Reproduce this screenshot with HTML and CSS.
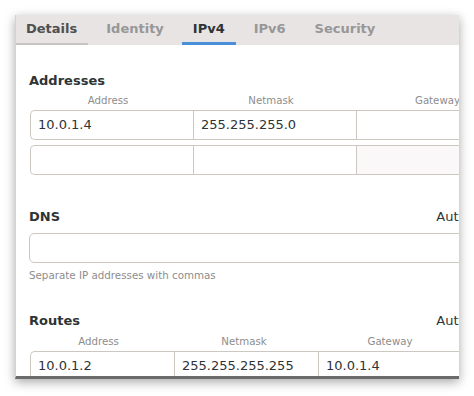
FILE: index.html
```html
<!DOCTYPE html>
<html lang="en">
<head>
  <meta charset="UTF-8">
  <title>IPv4 Settings</title>
  <link rel="stylesheet" href="styles.css">
</head>
<body>
  <div class="window">
    <div class="tabs">
      <div class="tab hover">Details</div>
      <div class="tab">Identity</div>
      <div class="tab active">IPv4</div>
      <div class="tab">IPv6</div>
      <div class="tab">Security</div>
    </div>

    <div class="content">
      <div class="section-title first">
        <span>Addresses</span>
      </div>
      <div class="col-heads addr">
        <span>Address</span>
        <span>Netmask</span>
        <span>Gateway</span>
      </div>
      <div class="linked addr">
        <div class="cell">10.0.1.4</div>
        <div class="cell">255.255.255.0</div>
        <div class="cell"></div>
      </div>
      <div class="linked addr second">
        <div class="cell"></div>
        <div class="cell"></div>
        <div class="cell disabled"></div>
      </div>

      <div class="section-title dns">
        <span>DNS</span>
        <span class="auto">Automatic <span class="switch"></span></span>
      </div>
      <div class="entry"></div>
      <div class="hint">Separate IP addresses with commas</div>

      <div class="section-title routes">
        <span>Routes</span>
        <span class="auto">Automatic <span class="switch"></span></span>
      </div>
      <div class="col-heads route">
        <span>Address</span>
        <span>Netmask</span>
        <span>Gateway</span>
        <span>Metric</span>
      </div>
      <div class="linked route">
        <div class="cell">10.0.1.2</div>
        <div class="cell">255.255.255.255</div>
        <div class="cell">10.0.1.4</div>
        <div class="cell"></div>
      </div>
    </div>
  </div>
</body>
</html>
```

FILE: styles.css
```css
body {
  margin: 0;
  background-color: #ffffff;
  font-family: "DejaVu Sans", sans-serif;
  color: #2e3436;
  width: 474px;
  height: 396px;
  overflow: hidden;
}
.window {
  margin: 15px 0 0 15px;
  width: 443px;
  height: 361px;
  overflow: hidden;
  background-color: #ffffff;
  border-left: 1px solid #d6d2d2;
  border-bottom: 3px solid #6b6b6b;
  box-shadow: 0 3px 10px rgba(0, 0, 0, 0.35);
}
.tabs {
  display: flex;
  gap: 7px;
  height: 30px;
  background-color: #e8e4e4;
  box-sizing: border-box;
}
.tab {
  padding: 0 11px;
  height: 30px;
  line-height: 28px;
  box-sizing: border-box;
  font-size: 13px;
  font-weight: bold;
  color: #979797;
  border-bottom: 3px solid transparent;
}
.tab:first-child {
  padding-left: 10px;
}
.tab.hover {
  color: #4f4f4f;
  border-bottom: 2px solid #c9c4c4;
}
.tab.active {
  color: #2e3436;
  border-bottom-color: #4a90d9;
}
.content {
  width: 536px;
  padding-left: 13px;
}
.section-title {
  display: flex;
  justify-content: space-between;
  align-items: center;
  height: 16px;
  font-size: 13px;
  font-weight: bold;
}
.section-title.first {
  padding-top: 27px;
}
.section-title.dns {
  margin-top: 33px;
}
.section-title.routes {
  margin-top: 30px;
}
.auto {
  display: flex;
  align-items: center;
  gap: 12px;
  font-weight: normal;
}
.switch {
  display: inline-block;
  width: 48px;
  height: 24px;
  border: 1px solid #cdc7c2;
  border-radius: 12px;
  background-color: #e1dedb;
}
.col-heads {
  display: flex;
  height: 14px;
  line-height: 14px;
  margin: 6px 0 2px 1px;
  font-size: 10.2px;
  color: #8d8d8d;
}
.col-heads span {
  flex-shrink: 0;
  text-align: center;
  padding-right: 7px;
  box-sizing: border-box;
}
.col-heads.addr span {
  width: 163px;
}
.col-heads.addr span:nth-child(3) {
  padding-right: 0;
}
.col-heads.route {
  margin-top: 7px;
}
.col-heads.route span {
  width: 144px;
}
.col-heads.route span:nth-child(2) {
  padding-right: 4px;
}
.col-heads.route span:nth-child(3) {
  padding-right: 0;
}
.linked {
  display: flex;
  margin-left: 1px;
  height: 30px;
  box-sizing: border-box;
  border: 1px solid #cdc7c2;
  border-radius: 5px 0 0 5px;
  border-right: none;
}
.linked.second {
  margin-top: 5px;
}
.cell {
  flex-shrink: 0;
  height: 28px;
  line-height: 28px;
  padding-left: 7px;
  box-sizing: border-box;
  font-size: 13px;
  border-left: 1px solid #cdc7c2;
}
.cell:first-child {
  border-left: none;
}
.linked.addr .cell {
  width: 163px;
}
.linked.addr .cell:first-child {
  width: 162px;
}
.linked.route .cell {
  width: 144px;
}
.linked.route .cell:first-child {
  width: 143px;
}
.cell.disabled {
  background-color: #faf8f8;
}
.entry {
  margin-top: 9px;
  height: 30px;
  box-sizing: border-box;
  border: 1px solid #cdc7c2;
  border-radius: 5px;
}
.hint {
  margin-top: 5px;
  height: 14px;
  line-height: 14px;
  font-size: 10.3px;
  color: #8d8d8d;
}
```
